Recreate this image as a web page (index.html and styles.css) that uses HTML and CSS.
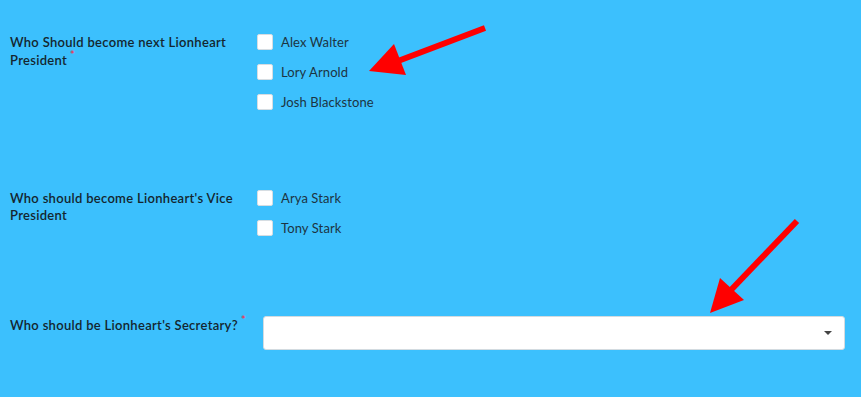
FILE: index.html
```html
<!DOCTYPE html>
<html>
<head>
<meta charset="utf-8">
<link rel="stylesheet" href="styles.css">
</head>
<body>
<div class="page">
  <div class="form">
    <div class="field field-1">
      <div class="label">Who Should become next Lionheart President<span class="req">*</span></div>
      <div class="options">
        <label class="opt"><span class="box"></span><span class="txt">Alex Walter</span></label>
        <label class="opt"><span class="box"></span><span class="txt">Lory Arnold</span></label>
        <label class="opt"><span class="box"></span><span class="txt">Josh Blackstone</span></label>
      </div>
    </div>
    <div class="field field-2">
      <div class="label">Who should become Lionheart's Vice President</div>
      <div class="options">
        <label class="opt"><span class="box"></span><span class="txt">Arya Stark</span></label>
        <label class="opt"><span class="box"></span><span class="txt">Tony Stark</span></label>
      </div>
    </div>
    <div class="field field-3">
      <div class="label label-inline">Who should be Lionheart's Secretary?<span class="req">*</span></div>
      <div class="select"><span class="caret"></span></div>
    </div>
  </div>
  <svg class="arrows" width="861" height="397" viewBox="0 0 861 397">
    <line x1="485" y1="28" x2="398" y2="61" stroke="#ff0000" stroke-width="6"/>
    <polygon points="369,71 394,44 406,75" fill="#ff0000"/>
    <line x1="797" y1="221" x2="730" y2="291" stroke="#ff0000" stroke-width="6"/>
    <polygon points="710,313 720,278 744,300" fill="#ff0000"/>
  </svg>
</div>
</body>
</html>
```
FILE: styles.css
```css
html, body {
  margin: 0;
  padding: 0;
  background: #3cc0fd;
}
.page {
  position: relative;
  width: 861px;
  height: 397px;
  overflow: hidden;
  font-family: "Lato", "Noto Sans", sans-serif;
}
.form {
  padding: 27px 16px 0 10px;
  display: flex;
  flex-direction: column;
}
.field {
  display: flex;
  align-items: flex-start;
}
.field-2 { margin-top: 66px; }
.field-3 { margin-top: 73px; }
.label {
  width: 240px;
  flex: none;
  padding-top: 7px;
  font-size: 13px;
  line-height: 17px;
  font-weight: 600;
  letter-spacing: 0.3px;
  color: #14262f;
  margin-right: 7px;
}
.label-inline {
  padding-top: 0;
  width: 238px;
  margin-right: 15px;
}
.req {
  display: inline-block;
  color: #e2405c;
  font-size: 11px;
  font-weight: 700;
  line-height: 7px;
  vertical-align: 6px;
  margin-left: 3px;
}
.options {
  display: flex;
  flex-direction: column;
}
.opt {
  height: 30px;
  display: flex;
  align-items: center;
}
.box {
  width: 14px;
  height: 14px;
  background: #fff;
  border: 1px solid #d6dde2;
  border-radius: 2px;
  margin-right: 8px;
}
.txt {
  font-size: 13px;
  letter-spacing: 0.1px;
  color: #1c3442;
}
.select {
  flex: 1;
  height: 32px;
  background: #fff;
  border: 1px solid #d3dbe0;
  border-radius: 3px;
  display: flex;
  align-items: center;
  justify-content: flex-end;
  padding-right: 12px;
}
.caret {
  width: 0;
  height: 0;
  border-left: 4px solid transparent;
  border-right: 4px solid transparent;
  border-top: 4px solid #444;
}
.arrows {
  position: absolute;
  left: 0;
  top: 0;
}
```
